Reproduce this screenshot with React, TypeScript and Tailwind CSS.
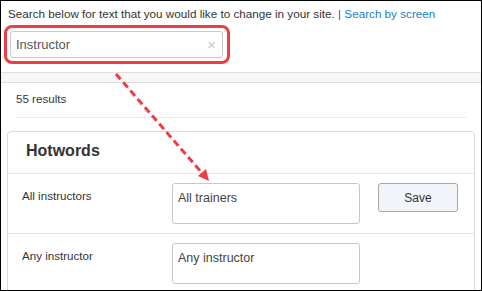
import { FunctionComponent } from "react";

type Row = {
    label: string;
    value: string;
    showSave?: boolean;
};

const rows: Row[] = [
    { label: "All instructors", value: "All trainers", showSave: true },
    { label: "Any instructor", value: "Any instructor" },
];

const Arrow = () => (
    <svg className="absolute left-0 top-0 pointer-events-none" width="482" height="291">
        <line x1="115" y1="73" x2="201" y2="172" stroke="#ef3d45" strokeWidth="3" strokeDasharray="7 4" />
        <polygon points="208,180 197,175 205,168" fill="#ef3d45" />
    </svg>
);

const HotwordRow: FunctionComponent<Row> = ({ label, value, showSave }) => {
    return (
        <div className="flex items-start border-t border-[#e6e6e6] pl-[14px] pt-[9px] pb-[9px]">
            <div className="w-[150px] pt-[6px] text-[11.6px] leading-[14px] text-[#333]">{label}</div>
            <div className="w-[188px] h-[41px] border border-[#c8c8c8] rounded-[3px] px-[5px] pt-[6px] text-[12.5px] leading-[16px] text-[#444]">
                {value}
            </div>
            {showSave && (
                <button className="ml-[18px] w-[80px] h-[29px] border border-[#a9a9a9] rounded-[3px] bg-[#f1f4f9] text-[12px] text-[#333]">
                    Save
                </button>
            )}
        </div>
    );
};

const App = () => {
    return (
        <div className="relative w-[482px] h-[291px] overflow-hidden border border-black bg-white font-['Liberation_Sans',Arial,sans-serif]">
            <div className="pl-[7px] pt-[6px] text-[11.7px] leading-[14px] text-[#333]">
                Search below for text that you would like to change in your site.{" "}
                <span className="text-[#7b2a8c]">|</span>{" "}
                <span className="text-[#1a80c4]">Search by screen</span>
            </div>
            <div className="ml-[3px] mt-[4px] w-[226px] h-[39px] border-[3px] border-[#ef3d45] rounded-[8px] flex items-center pl-[3px] pr-[4px]">
                <div className="flex items-center w-full h-[27px] border border-[#c8c8c8] rounded-[3px] pl-[5px] pr-[6px]">
                    <span className="flex-1 text-[13px] text-[#555]">Instructor</span>
                    <span className="text-[15px] leading-none text-[#c8c8c8]">×</span>
                </div>
            </div>
            <div className="mt-[8px] h-[11px] border-t border-b border-[#dedede] bg-[#f7f7f7]" />
            <div className="pl-[15px] pt-[9px] pb-[11px] text-[11.6px] leading-[14px] text-[#333]">55 results</div>
            <div className="mx-[15px] border-t border-[#ececec]" />
            <div className="ml-[6px] mt-[13px] w-[468px] border border-[#dcdcdc] rounded-[4px]">
                <div className="pl-[18px] pt-[9px] pb-[12px] text-[16px] leading-[20px] font-bold text-[#333]">Hotwords</div>
                {rows.map((row, index) => (
                    <HotwordRow key={index} {...row} />
                ))}
            </div>
            <Arrow />
        </div>
    );
};

export default App;
